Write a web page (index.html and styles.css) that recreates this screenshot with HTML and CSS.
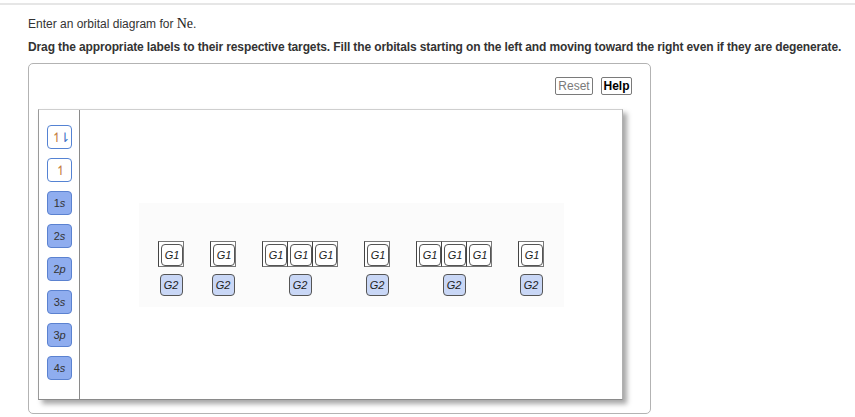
FILE: index.html
```html
<!DOCTYPE html>
<html lang="en">
<head>
  <meta charset="UTF-8" />
  <meta name="viewport" content="width=device-width, initial-scale=1" />
  <title>Orbital diagram for Ne</title>
  <link rel="stylesheet" href="styles.css">
</head>
<body>
  <div class="topline"></div>

  <main class="page">
    <p class="prompt">Enter an orbital diagram for <span class="chem">Ne</span>.</p>
    <p class="instructions">Drag the appropriate labels to their respective targets. Fill the orbitals starting on the left and moving toward the right even if they are degenerate.</p>

    <section class="panel">
      <div class="toolbar">
        <button type="button" class="btn btn-reset">Reset</button>
        <button type="button" class="btn btn-help">Help</button>
      </div>

      <div class="canvas">
        <div class="palette">
          <div class="chip chip-arrow"><span class="up">&#8639;</span><span class="down">&#8642;</span></div>
          <div class="chip chip-arrow"><span class="up">&#8639;</span></div>
          <div class="chip chip-label">1<i>s</i></div>
          <div class="chip chip-label">2<i>s</i></div>
          <div class="chip chip-label">2<i>p</i></div>
          <div class="chip chip-label">3<i>s</i></div>
          <div class="chip chip-label">3<i>p</i></div>
          <div class="chip chip-label">4<i>s</i></div>
        </div>

        <div class="stage">
          <div class="diagram">
            <div class="group">
              <div class="slots">
                <div class="slot"><div class="tile">G1</div></div>
              </div>
              <div class="target">G2</div>
            </div>
            <div class="group">
              <div class="slots">
                <div class="slot"><div class="tile">G1</div></div>
              </div>
              <div class="target">G2</div>
            </div>
            <div class="group">
              <div class="slots">
                <div class="slot"><div class="tile">G1</div></div>
                <div class="slot"><div class="tile">G1</div></div>
                <div class="slot"><div class="tile">G1</div></div>
              </div>
              <div class="target">G2</div>
            </div>
            <div class="group">
              <div class="slots">
                <div class="slot"><div class="tile">G1</div></div>
              </div>
              <div class="target">G2</div>
            </div>
            <div class="group">
              <div class="slots">
                <div class="slot"><div class="tile">G1</div></div>
                <div class="slot"><div class="tile">G1</div></div>
                <div class="slot"><div class="tile">G1</div></div>
              </div>
              <div class="target">G2</div>
            </div>
            <div class="group">
              <div class="slots">
                <div class="slot"><div class="tile">G1</div></div>
              </div>
              <div class="target">G2</div>
            </div>
          </div>
        </div>
      </div>
    </section>
  </main>
</body>
</html>
```

FILE: styles.css
```css
:root {
  --texto: #333333;
  --borde: #b3b3b3;
  --azul: #8fadef;
  --azul-borde: #5b82d0;
  --azul-claro: #c9d7f6;
}
* {
  box-sizing: border-box;
}
body {
  margin: 0;
  font-family: 'Liberation Sans', Arial, sans-serif;
  font-size: 12px;
  color: var(--texto);
  background: #ffffff;
}
.topline {
  margin-top: 3px;
  height: 2px;
  background: #e6e6e6;
}
.page {
  padding-left: 28px;
}
.prompt {
  margin: 12px 0 0;
  line-height: 14px;
}
.chem {
  font-family: 'Liberation Serif', 'Times New Roman', serif;
  font-size: 14px;
  color: #222;
}
.instructions {
  margin: 9px 0 0;
  line-height: 14px;
  font-weight: bold;
  white-space: nowrap;
  letter-spacing: -0.12px;
}
.panel {
  margin-top: 9px;
  width: 623px;
  height: 351px;
  border: 1px solid var(--borde);
  border-radius: 5px;
}
.toolbar {
  display: flex;
  justify-content: flex-end;
  gap: 8px;
  padding: 13px 18px 0 0;
}
.btn {
  height: 18px;
  padding: 0;
  font-family: 'Liberation Sans', Arial, sans-serif;
  font-size: 12px;
  line-height: 16px;
  background: #fff;
  border: 1px solid #7a7a7a;
  border-radius: 2px;
}
.btn-reset {
  width: 38px;
  color: #7a7a7a;
}
.btn-help {
  width: 31px;
  font-weight: bold;
  color: #000;
}
.canvas {
  display: flex;
  margin: 14px 0 0 9px;
  width: 585px;
  height: 291px;
  background: #fff;
  border-top: 1px solid #cfcfcf;
  border-left: 1px solid #9a9a9a;
  border-bottom: 1px solid #8a8a8a;
  border-right: 1px solid #b0b0b0;
  box-shadow: 4px 4px 5px rgba(0, 0, 0, 0.35);
}
.palette {
  display: flex;
  flex-direction: column;
  gap: 9px;
  width: 41px;
  padding: 15px 0 0 8px;
  border-right: 1px solid #8a8a8a;
}
.chip {
  display: flex;
  align-items: center;
  justify-content: center;
  width: 25px;
  height: 24px;
  border-radius: 4px;
  font-size: 11px;
}
.chip-arrow {
  background: #fff;
  border: 1.5px solid #5583d3;
  font-family: 'DejaVu Sans', sans-serif;
  font-size: 13px;
  letter-spacing: -3px;
}
.chip-arrow .up {
  color: #c5803f;
}
.chip-arrow .down {
  color: #3f72c8;
}
.chip-label {
  background: var(--azul);
  border: 1px solid var(--azul-borde);
  color: #333;
}
.chip-label i {
  font-style: italic;
}
.stage {
  flex: 1;
  display: flex;
  align-items: center;
  justify-content: center;
}
.diagram {
  display: flex;
  justify-content: center;
  gap: 26px;
  width: 425px;
  padding: 38px 20px 11px;
  background: #fbfbfb;
}
.group {
  display: flex;
  flex-direction: column;
  align-items: center;
  gap: 7px;
}
.slots {
  display: flex;
}
.slot {
  width: 26px;
  height: 26px;
  padding: 2px 0 0 2px;
  border: 1px solid #777;
  border-left-color: #444;
  background: #fff;
}
.slot + .slot {
  margin-left: -1px;
}
.tile {
  display: flex;
  align-items: center;
  justify-content: center;
  width: 22px;
  height: 22px;
  border: 1px solid #555;
  border-radius: 4px;
  background: #fff;
  font-size: 11px;
  font-style: italic;
  color: #222;
}
.target {
  display: flex;
  align-items: center;
  justify-content: center;
  width: 23px;
  height: 22px;
  border: 1px solid #555;
  border-radius: 4px;
  background: var(--azul-claro);
  font-size: 11px;
  font-style: italic;
  color: #222;
}
```
